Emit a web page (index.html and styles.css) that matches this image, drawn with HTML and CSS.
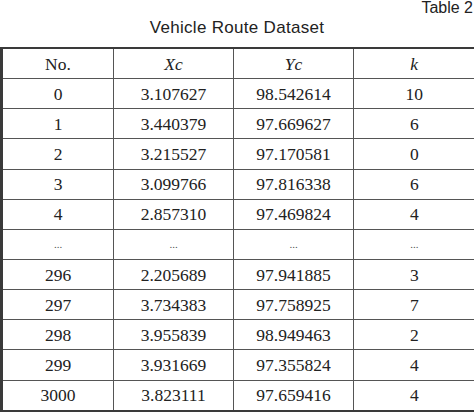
FILE: index.html
```html
<!DOCTYPE html>
<html>
<head>
<meta charset="utf-8">
<link rel="stylesheet" href="styles.css">
</head>
<body>
<div class="label">Table 2</div>
<div class="title">Vehicle Route Dataset</div>
<table class="data">
  <colgroup>
    <col class="c1"><col class="c2"><col class="c3"><col class="c4">
  </colgroup>
  <thead>
    <tr><th>No.</th><th><i>Xc</i></th><th><i>Yc</i></th><th><i>k</i></th></tr>
  </thead>
  <tbody>
    <tr><td>0</td><td>3.107627</td><td>98.542614</td><td>10</td></tr>
    <tr><td>1</td><td>3.440379</td><td>97.669627</td><td>6</td></tr>
    <tr><td>2</td><td>3.215527</td><td>97.170581</td><td>0</td></tr>
    <tr><td>3</td><td>3.099766</td><td>97.816338</td><td>6</td></tr>
    <tr><td>4</td><td>2.857310</td><td>97.469824</td><td>4</td></tr>
    <tr class="dots"><td>...</td><td>...</td><td>...</td><td>...</td></tr>
    <tr><td>296</td><td>2.205689</td><td>97.941885</td><td>3</td></tr>
    <tr><td>297</td><td>3.734383</td><td>97.758925</td><td>7</td></tr>
    <tr><td>298</td><td>3.955839</td><td>98.949463</td><td>2</td></tr>
    <tr><td>299</td><td>3.931669</td><td>97.355824</td><td>4</td></tr>
    <tr><td>3000</td><td>3.823111</td><td>97.659416</td><td>4</td></tr>
  </tbody>
</table>
</body>
</html>
```
FILE: styles.css
```css
html, body {
  margin: 0;
  padding: 0;
  background: #ffffff;
}
body {
  width: 474px;
  height: 412px;
  overflow: hidden;
}
.label {
  font-family: "Liberation Sans", Arial, sans-serif;
  font-size: 16px;
  line-height: 16px;
  height: 14px;
  text-align: right;
  color: #222;
  padding-right: 1px;
}
.title {
  font-family: "Liberation Sans", Arial, sans-serif;
  font-size: 17px;
  line-height: 27px;
  height: 27px;
  text-align: center;
  color: #222;
  letter-spacing: 0.3px;
  margin-bottom: 6px;
}
.data {
  width: 474px;
  table-layout: fixed;
  border-collapse: collapse;
  border-top: 2px solid #3a3a3a;
  border-bottom: 2px solid #3a3a3a;
  border-left: 3px solid #3a3a3a;
  border-right: 2px solid #3a3a3a;
  font-family: "Liberation Serif", "Times New Roman", serif;
  font-size: 17.5px;
  color: #222;
}
.c1 { width: 112px; }
.c2 { width: 120px; }
.c3 { width: 120px; }
.c4 { width: 122px; }
.data th,
.data td {
  border: 1px solid #555;
  height: 29.15px;
  padding: 0;
  text-align: center;
  vertical-align: middle;
  font-weight: normal;
  line-height: 20px;
}
.data th i {
  font-style: italic;
}
.dots td {
  font-size: 11px;
  color: #555;
}
```
